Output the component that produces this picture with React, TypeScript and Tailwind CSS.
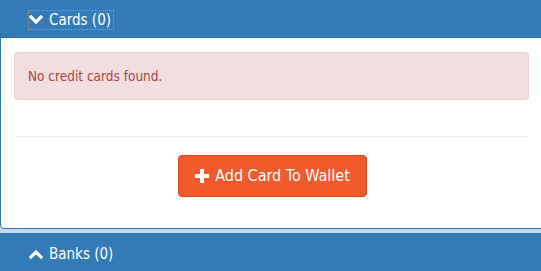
import React from "react";

function Chevron({ up = false }: { up?: boolean }) {
  return (
    <svg width="14" height="12" viewBox="0 0 14 12" className="shrink-0">
      <polyline
        points={up ? "2,9 7,4 12,9" : "2,3 7,8 12,3"}
        fill="none"
        stroke="#fff"
        strokeWidth="3.2"
        strokeLinecap="square"
      />
    </svg>
  );
}

function PanelHeader({ title, up = false, focused = false }: { title: string; up?: boolean; focused?: boolean }) {
  return (
    <div className="h-[38px] bg-[#337ab7] border-b border-[#2e6da4] flex items-center pl-[29px] pt-[3px]">
      <div
        className={[
          "flex items-center gap-[6px] h-[18px] pr-[2px]",
          focused ? "outline outline-1 outline-dotted outline-[#d9873f]" : "",
        ].join(" ")}
      >
        <Chevron up={up} />
        <span className="text-white text-[15px] leading-none">{title}</span>
      </div>
    </div>
  );
}

export default function App() {
  return (
    <div
      className="w-[541px] h-[271px] overflow-hidden bg-white"
      style={{ fontFamily: '"DejaVu Sans Condensed", "DejaVu Sans", sans-serif' }}
    >
      {/* Cards panel */}
      <PanelHeader title="Cards (0)" focused />
      <div className="h-[191px] border-l border-b border-[#337ab7] rounded-bl-[4px] pl-[13px] pr-[12px] pt-[14px]">
        <div className="h-[48px] rounded-[4px] border border-[#ebccd1] bg-[#f2dede] text-[#a94442] text-[13.5px] flex items-center px-[13px]">
          No credit cards found.
        </div>
        <div className="mt-[36px] border-t border-[#eeeeee]" />
        <div className="flex justify-center pt-[18px] pl-[2px]">
          <button className="h-[42px] w-[189px] rounded-[4px] bg-[#f15a2b] border border-[#d8471c] text-white text-[16px] flex items-center justify-center gap-[6px]">
            <svg width="14" height="14" viewBox="0 0 14 14">
              <rect x="5" y="0" width="4" height="14" fill="#fff" />
              <rect x="0" y="5" width="14" height="4" fill="#fff" />
            </svg>
            Add Card To Wallet
          </button>
        </div>
      </div>
      <div className="h-[4px] bg-[#c7dbed]" />
      {/* Banks panel */}
      <div className="border-t border-[#2e6da4]">
        <PanelHeader title="Banks (0)" up />
      </div>
    </div>
  );
}
